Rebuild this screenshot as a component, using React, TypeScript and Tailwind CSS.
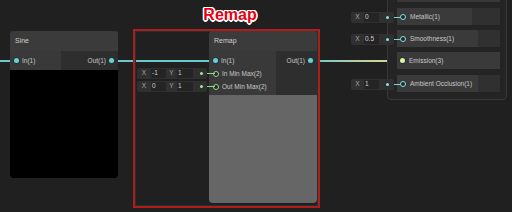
import React from 'react';

const font = { fontFamily: '"Liberation Sans", Arial, sans-serif' };

function Dot({ color = 'bg-[#6fcdd2]' }: { color?: string }) {
  return <span className={`block w-[5px] h-[5px] rounded-full ${color} ring-1 ring-[#1d3a3b] shrink-0`} />;
}

function Hollow({ border }: { border: string }) {
  return <span className={`block w-[6px] h-[6px] rounded-full border ${border} bg-[#262626] shrink-0`} />;
}

function Vec2Field({ x, y, top }: { x: string; y: string; top: string }) {
  return (
    <div className={`absolute left-[137px] ${top} flex items-center`}>
      <div className="w-[70px] h-[10.5px] bg-[#303030] rounded-[2px] flex items-center text-[6.5px] text-[#a8a8a8]">
        <span className="w-[14px] text-center">X</span>
        <span className="w-[15px] h-[9px] bg-[#242424] text-[#d0d0d0] flex items-center pl-[1px]">{x}</span>
        <span className="w-[11px] text-center">Y</span>
        <span className="w-[16px] h-[9px] bg-[#242424] text-[#d0d0d0] flex items-center pl-[1px]">{y}</span>
        <span className="ml-auto mr-[4px] w-[3px] h-[3px] rounded-full bg-[#9aef92]" />
      </div>
      <div className="w-[8px] h-[1.5px] bg-[#8fd98a]" />
    </div>
  );
}

function Vec1Field({ v, top }: { v: string; top: string }) {
  return (
    <div className={`absolute left-[351px] ${top} flex items-center`}>
      <div className="w-[43px] h-[10.5px] bg-[#303030] rounded-[2px] flex items-center text-[6.5px] text-[#a8a8a8]">
        <span className="w-[13px] text-center">X</span>
        <span className="w-[15px] h-[9px] bg-[#242424] text-[#d0d0d0] flex items-center pl-[1px]">{v}</span>
        <span className="ml-auto mr-[5px] w-[3px] h-[3px] rounded-full bg-[#84e4e7]" />
      </div>
      <div className="w-[6px] h-[1.5px] bg-[#7fd6da]" />
    </div>
  );
}

function MasterRow({ label, top, light, port }: { label: string; top: string; light: string; port: React.ReactNode }) {
  return (
    <div className={`absolute left-[9px] ${top} w-[103px] h-[17px] flex bg-[#303030]`}>
      <div className={`${light} h-full bg-[#3a3a3a] flex items-center gap-[4px] pl-[3px] text-[6.5px] text-[#c8c8c8]`}>
        {port}
        <span>{label}</span>
      </div>
    </div>
  );
}

export default function App() {
  return (
    <div className="relative w-[512px] h-[212px] bg-[#202020] overflow-hidden" style={font}>
      {/* wires */}
      <div className="absolute left-0 top-[59.5px] w-[16px] h-[2px] bg-[#6cc8cc]" />
      <div className="absolute left-[112px] top-[59.5px] w-[103px] h-[2px] bg-[#6cc8cc]" />
      <div className="absolute left-[310px] top-[60px] w-[78px] h-[2px] bg-gradient-to-r from-[#66c6ca] via-[#a6cfa8] to-[#d2da8e]" />
      <div className="absolute left-[387px] top-[60px] w-[13px] h-[2px] bg-[#5c5a26]" />

      {/* Sine node */}
      <div className="absolute left-[10px] top-[31px] w-[108px] flex flex-col">
        <div className="h-[20px] bg-[#3b3b3b] rounded-t-[3px] flex items-center pl-[5px] text-[7px] text-[#cfcfcf]">Sine</div>
        <div className="h-[19px] flex">
          <div className="w-[51px] bg-[#393939] flex items-center gap-[3px] pl-[4px] text-[6.5px] text-[#c8c8c8]">
            <Dot />
            <span>In(1)</span>
          </div>
          <div className="flex-1 bg-[#2e2e2e] flex items-center justify-end gap-[3px] pr-[4px] text-[6.5px] text-[#c8c8c8]">
            <span>Out(1)</span>
            <Dot />
          </div>
        </div>
        <div className="h-[108px] bg-black rounded-b-[4px]" />
      </div>

      {/* Remap selection */}
      <div className="absolute left-[133px] top-[29px] w-[187px] h-[179px] border-2 border-[#b21b1b] shadow-[inset_0_0_0_1px_#1b3535]" />
      <div className="absolute left-[230px] top-[7px] -translate-x-1/2 text-[16px] font-bold leading-none text-[#e60012] [text-shadow:-1.5px_0_0_#fff,1.5px_0_0_#fff,0_-1.5px_0_#fff,0_1.5px_0_#fff,-1px_-1px_0_#fff,1px_-1px_0_#fff,-1px_1px_0_#fff,1px_1px_0_#fff]">
        Remap
      </div>

      {/* Remap node */}
      <div className="absolute left-[209px] top-[31px] w-[108px] flex flex-col">
        <div className="h-[20px] bg-[#3b3b3b] rounded-t-[3px] flex items-center pl-[5px] text-[7px] text-[#cfcfcf]">Remap</div>
        <div className="h-[44px] flex">
          <div className="w-[67px] bg-[#393939] flex flex-col pt-[3px] text-[6.5px] text-[#c8c8c8]">
            <div className="h-[13px] flex items-center gap-[3px] pl-[4px]">
              <Dot />
              <span>In(1)</span>
            </div>
            <div className="h-[13px] flex items-center gap-[3px] pl-[4px]">
              <Hollow border="border-[#8fd98a]" />
              <span>In Min Max(2)</span>
            </div>
            <div className="h-[13px] flex items-center gap-[3px] pl-[4px]">
              <Hollow border="border-[#8fd98a]" />
              <span>Out Min Max(2)</span>
            </div>
          </div>
          <div className="flex-1 bg-[#2e2e2e] flex flex-col pt-[3px] text-[6.5px] text-[#c8c8c8]">
            <div className="h-[13px] flex items-center justify-end gap-[3px] pr-[4px]">
              <span>Out(1)</span>
              <Dot />
            </div>
          </div>
        </div>
        <div className="h-[108px] bg-[#666666] rounded-b-[4px]" />
      </div>

      <Vec2Field x="-1" y="1" top="top-[68px]" />
      <Vec2Field x="0" y="1" top="top-[81px]" />

      {/* Master node (partial) */}
      <div className="absolute left-[387px] top-[-8px] w-[120px] h-[108px] border border-[#393939] rounded-[4px] bg-[#242424]">
        <div className="absolute left-[9px] top-[-8px] w-[103px] h-[17px] bg-[#383838]" />
        <MasterRow label="Metallic(1)" top="top-[15px]" light="w-[75px]" port={<Hollow border="border-[#84e4e7]" />} />
        <MasterRow label="Smoothness(1)" top="top-[37px]" light="w-[81px]" port={<Hollow border="border-[#84e4e7]" />} />
        <MasterRow label="Emission(3)" top="top-[59px]" light="w-[103px]" port={<Dot color="bg-[#e8ef96]" />} />
        <MasterRow label="Ambient Occlusion(1)" top="top-[82px]" light="w-[81px]" port={<Hollow border="border-[#84e4e7]" />} />
      </div>

      <Vec1Field v="0" top="top-[12px]" />
      <Vec1Field v="0.5" top="top-[34px]" />
      <Vec1Field v="1" top="top-[79px]" />
    </div>
  );
}
